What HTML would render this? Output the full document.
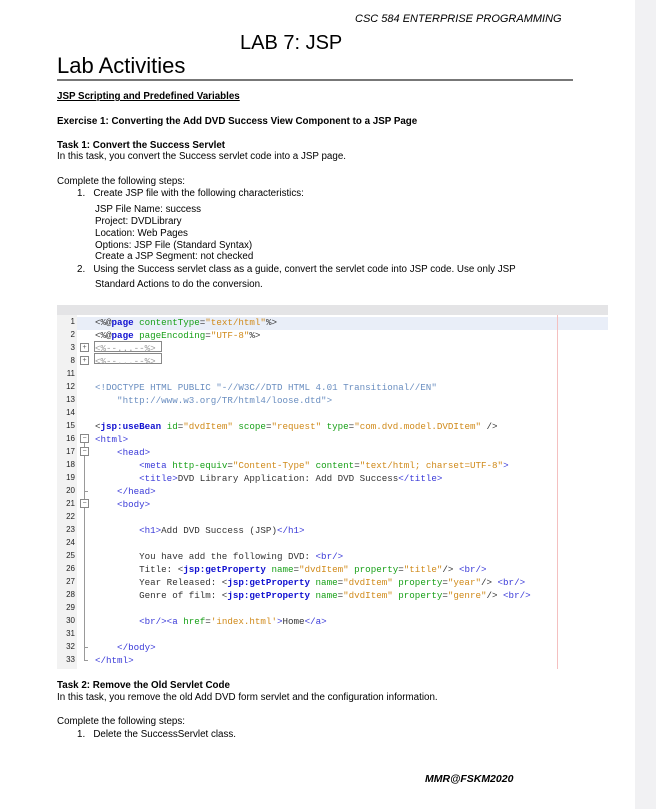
<!DOCTYPE html>
<html><head><meta charset="utf-8">
<style>
body{margin:0;width:656px;height:809px;background:#fff;position:relative;overflow:hidden;font-family:"Liberation Sans",Arial,sans-serif;color:#000}
.side{position:absolute;left:635px;top:0;width:21px;height:809px;background:#f1f1f3}
.t{position:absolute;white-space:pre;font-size:9.8px;line-height:12px}
.b{font-weight:bold}
.code{position:absolute;left:57px;top:305px;width:551px;height:364px;background:#fff}
.bar{position:absolute;left:0;top:0;width:551px;height:10px;background:#e4e4e6}
.gut{position:absolute;left:0;top:10px;width:20px;height:354px;background:#f2f2f2}
.hl{position:absolute;left:20px;top:12px;width:531px;height:13px;background:#e9eef8}
.marg{position:absolute;left:500px;top:10px;width:1px;height:354px;background:#f4c0c0}
.ln{position:absolute;left:0;width:18px;text-align:right;font-size:8px;font-family:"Liberation Sans",sans-serif;color:#222;line-height:10px}
.c{position:absolute;left:38px;white-space:pre;font-family:"Liberation Mono",monospace;font-size:9.2px;line-height:10px;color:#333}
.tg{color:#3a3ad8}.at{color:#18a018}.st{color:#d08a1a}.kw{color:#1010d0;font-weight:bold}.cm{color:#999}.dt{color:#6a8ec0}
.fb{position:absolute;left:23px;width:7px;height:7px;border:1px solid #888;background:#fff;font-size:7px;line-height:7px;text-align:center;color:#555;font-family:"Liberation Sans",sans-serif}
.vl{position:absolute;left:27px;width:1px;background:#999}
.box{position:absolute;left:37px;width:68px;height:11px;border:1px solid #888;box-sizing:border-box}
</style></head><body>
<div class="side"></div>
<div class="t" style="left:355px;top:13px;font-size:11px;font-style:italic">CSC 584 ENTERPRISE PROGRAMMING</div>
<div class="t" style="left:240px;top:31px;font-size:20px;line-height:24px">LAB 7: JSP</div>
<div class="t" style="left:57px;top:53px;font-size:22px;line-height:26px">Lab Activities</div>
<div style="position:absolute;left:57px;top:79px;width:516px;height:2px;background:#777"></div>
<div class="t b" style="left:57px;top:91px;text-decoration:underline">JSP Scripting and Predefined Variables</div>
<div class="t b" style="left:57px;top:116px">Exercise 1: Converting the Add DVD Success View Component to a JSP Page</div>
<div class="t b" style="left:57px;top:140px">Task 1: Convert the Success Servlet</div>
<div class="t" style="left:57px;top:151px">In this task, you convert the Success servlet code into a JSP page.</div>
<div class="t" style="left:57px;top:176px">Complete the following steps:</div>
<div class="t" style="left:77px;top:188px">1.   Create JSP file with the following characteristics:</div>
<div class="t" style="left:95px;top:204px">JSP File Name: success</div>
<div class="t" style="left:95px;top:216px">Project: DVDLibrary</div>
<div class="t" style="left:95px;top:228px">Location: Web Pages</div>
<div class="t" style="left:95px;top:240px">Options: JSP File (Standard Syntax)</div>
<div class="t" style="left:95px;top:251px">Create a JSP Segment: not checked</div>
<div class="t" style="left:77px;top:264px">2.   Using the Success servlet class as a guide, convert the servlet code into JSP code. Use only JSP</div>
<div class="t" style="left:95px;top:279px">Standard Actions to do the conversion.</div>

<div class="code">
<div class="bar"></div><div class="gut"></div><div class="hl"></div><div class="marg"></div>
<div class="ln" style="top:12px">1</div><div class="ln" style="top:25px">2</div><div class="ln" style="top:38px">3</div><div class="ln" style="top:51px">8</div>
<div class="ln" style="top:64px">11</div><div class="ln" style="top:77px">12</div><div class="ln" style="top:90px">13</div><div class="ln" style="top:103px">14</div>
<div class="ln" style="top:116px">15</div><div class="ln" style="top:129px">16</div><div class="ln" style="top:142px">17</div><div class="ln" style="top:155px">18</div>
<div class="ln" style="top:168px">19</div><div class="ln" style="top:181px">20</div><div class="ln" style="top:194px">21</div><div class="ln" style="top:207px">22</div>
<div class="ln" style="top:220px">23</div><div class="ln" style="top:233px">24</div><div class="ln" style="top:246px">25</div><div class="ln" style="top:259px">26</div>
<div class="ln" style="top:272px">27</div><div class="ln" style="top:285px">28</div><div class="ln" style="top:298px">29</div><div class="ln" style="top:311px">30</div>
<div class="ln" style="top:324px">31</div><div class="ln" style="top:337px">32</div><div class="ln" style="top:350px">33</div>
<div class="fb" style="top:38px">+</div><div class="fb" style="top:51px">+</div>
<div class="vl" style="top:137px;height:219px"></div>
<div class="fb" style="top:129px">−</div><div class="fb" style="top:142px">−</div><div class="fb" style="top:194px">−</div>
<div style="position:absolute;left:27px;top:186px;width:4px;height:1px;background:#999"></div>
<div style="position:absolute;left:27px;top:342px;width:4px;height:1px;background:#999"></div>
<div style="position:absolute;left:27px;top:355px;width:4px;height:1px;background:#999"></div>
<div class="box" style="top:36px"></div><div class="box" style="top:48px"></div>
<div class="c" style="top:13px">&lt;%@<span class="kw">page</span> <span class="at">contentType</span>=<span class="st">"text/html"</span>%&gt;</div>
<div class="c" style="top:26px">&lt;%@<span class="kw">page</span> <span class="at">pageEncoding</span>=<span class="st">"UTF-8"</span>%&gt;</div>
<div class="c cm" style="top:39px">&lt;%--...--%&gt;</div>
<div class="c cm" style="top:52px">&lt;%--...--%&gt;</div>
<div class="c dt" style="top:78px">&lt;!DOCTYPE HTML PUBLIC "-//W3C//DTD HTML 4.01 Transitional//EN"</div>
<div class="c dt" style="top:91px">    "http://www.w3.org/TR/html4/loose.dtd"&gt;</div>
<div class="c" style="top:117px">&lt;<span class="kw">jsp:useBean</span> <span class="at">id</span>=<span class="st">"dvdItem"</span> <span class="at">scope</span>=<span class="st">"request"</span> <span class="at">type</span>=<span class="st">"com.dvd.model.DVDItem"</span> /&gt;</div>
<div class="c tg" style="top:130px">&lt;html&gt;</div>
<div class="c tg" style="top:143px">    &lt;head&gt;</div>
<div class="c" style="top:156px">        <span class="tg">&lt;meta</span> <span class="at">http-equiv</span>=<span class="st">"Content-Type"</span> <span class="at">content</span>=<span class="st">"text/html; charset=UTF-8"</span><span class="tg">&gt;</span></div>
<div class="c" style="top:169px">        <span class="tg">&lt;title&gt;</span>DVD Library Application: Add DVD Success<span class="tg">&lt;/title&gt;</span></div>
<div class="c tg" style="top:182px">    &lt;/head&gt;</div>
<div class="c tg" style="top:195px">    &lt;body&gt;</div>
<div class="c" style="top:221px">        <span class="tg">&lt;h1&gt;</span>Add DVD Success (JSP)<span class="tg">&lt;/h1&gt;</span></div>
<div class="c" style="top:247px">        You have add the following DVD: <span class="tg">&lt;br/&gt;</span></div>
<div class="c" style="top:260px">        Title: &lt;<span class="kw">jsp:getProperty</span> <span class="at">name</span>=<span class="st">"dvdItem"</span> <span class="at">property</span>=<span class="st">"title"</span>/&gt; <span class="tg">&lt;br/&gt;</span></div>
<div class="c" style="top:273px">        Year Released: &lt;<span class="kw">jsp:getProperty</span> <span class="at">name</span>=<span class="st">"dvdItem"</span> <span class="at">property</span>=<span class="st">"year"</span>/&gt; <span class="tg">&lt;br/&gt;</span></div>
<div class="c" style="top:286px">        Genre of film: &lt;<span class="kw">jsp:getProperty</span> <span class="at">name</span>=<span class="st">"dvdItem"</span> <span class="at">property</span>=<span class="st">"genre"</span>/&gt; <span class="tg">&lt;br/&gt;</span></div>
<div class="c" style="top:312px">        <span class="tg">&lt;br/&gt;&lt;a</span> <span class="at">href</span>=<span class="st">'index.html'</span><span class="tg">&gt;</span>Home<span class="tg">&lt;/a&gt;</span></div>
<div class="c tg" style="top:338px">    &lt;/body&gt;</div>
<div class="c tg" style="top:351px">&lt;/html&gt;</div>
</div>

<div class="t b" style="left:57px;top:680px">Task 2: Remove the Old Servlet Code</div>
<div class="t" style="left:57px;top:692px">In this task, you remove the old Add DVD form servlet and the configuration information.</div>
<div class="t" style="left:57px;top:716px">Complete the following steps:</div>
<div class="t" style="left:77px;top:729px">1.   Delete the SuccessServlet class.</div>
<div class="t b" style="left:425px;top:773px;font-style:italic;font-size:10.5px">MMR@FSKM2020</div>
</body></html>
